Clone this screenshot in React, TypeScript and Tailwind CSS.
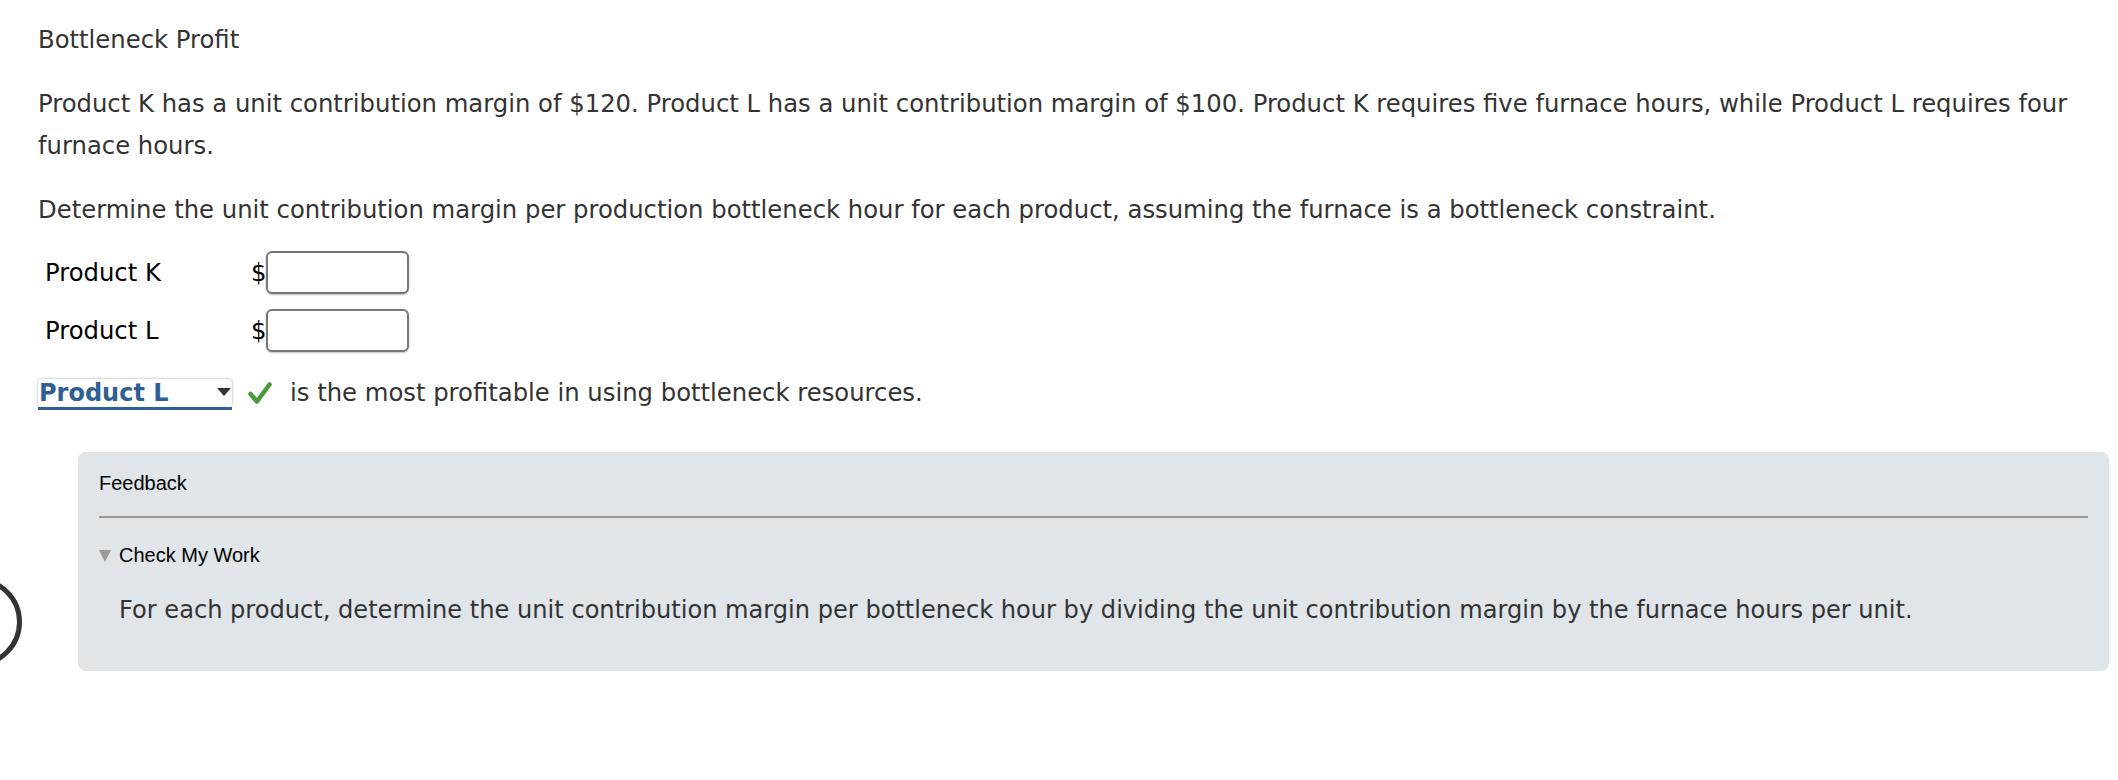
import React from "react";

function Check() {
  return (
    <svg width="24" height="24" viewBox="0 0 24 24" className="shrink-0">
      <path d="M2.5 13 L9 20.5 L21.5 3.5" fill="none" stroke="#4a9a3c" strokeWidth="4.5" strokeLinecap="round" strokeLinejoin="round" />
    </svg>
  );
}

function AmountRow({ label }: { label: string }) {
  return (
    <div className="flex items-center h-[43px]">
      <div className="w-[213px] pl-[7px] text-black">{label}</div>
      <span className="text-black">$</span>
      <div className="w-[143px] h-[43px] rounded-[6px] border-2 border-[#777] bg-white shadow-[0_1px_2px_rgba(0,0,0,0.25)]" />
    </div>
  );
}

export default function App() {
  return (
    <div className="relative w-full h-[780px] bg-white overflow-hidden font-['DejaVu_Sans','Verdana',sans-serif] text-[24.3px] leading-[42px] text-[#333]">
      <div className="pl-[38px] pr-[20px] pt-[19px]">
        <p>Bottleneck Profit</p>
        <p className="mt-[22px]">
          Product K has a unit contribution margin of $120. Product L has a unit contribution margin of $100. Product K requires five furnace hours, while Product L requires four furnace hours.
        </p>
        <p className="mt-[22px]">
          Determine the unit contribution margin per production bottleneck hour for each product, assuming the furnace is a bottleneck constraint.
        </p>

        <div className="mt-[20px] flex flex-col gap-[15px]">
          <AmountRow label="Product K" />
          <AmountRow label="Product L" />
        </div>

        <div className="mt-[27px] flex items-center h-[28px]">
          <div className="relative w-[194px] h-[28px] rounded-[4px] bg-white shadow-[0_0_3px_rgba(0,0,0,0.35)] flex items-center pl-[1px]">
            <span className="font-bold text-[#2e5f96] text-[24px] leading-none">Product L</span>
            <span className="absolute right-[1px] top-[9px] w-0 h-0 border-l-[7px] border-r-[7px] border-t-[8px] border-l-transparent border-r-transparent border-t-[#333]" />
            <div className="absolute left-0 right-0 bottom-[-3px] h-[3px] bg-[#2e5f96]" />
          </div>
          <div className="ml-[16px]">
            <Check />
          </div>
          <span className="ml-[18px]">is the most profitable in using bottleneck resources.</span>
        </div>
      </div>

      <div className="ml-[78px] mr-[9px] mt-[45px] h-[219px] rounded-[8px] bg-[#dfe5e9] px-[21px] pt-[18px] font-['Liberation_Sans','Arial',sans-serif] text-[20px] leading-[27px] text-black">
        <div>Feedback</div>
        <div className="mt-[19px] h-[2px] bg-[#999]" />
        <div className="mt-[24px] flex items-center">
          <span className="w-0 h-0 border-l-[6px] border-r-[6px] border-t-[12px] border-l-transparent border-r-transparent border-t-[#999] mr-[8px]" />
          <span>Check My Work</span>
        </div>
        <p className="mt-[26px] pl-[20px] font-['DejaVu_Sans','Verdana',sans-serif] text-[24.1px] leading-[30px] text-[#333]">
          For each product, determine the unit contribution margin per bottleneck hour by dividing the unit contribution margin by the furnace hours per unit.
        </p>
      </div>

      <div className="absolute left-[-68px] top-[577px] w-[90px] h-[90px] rounded-full border-[5px] border-[#333]" />
    </div>
  );
}
